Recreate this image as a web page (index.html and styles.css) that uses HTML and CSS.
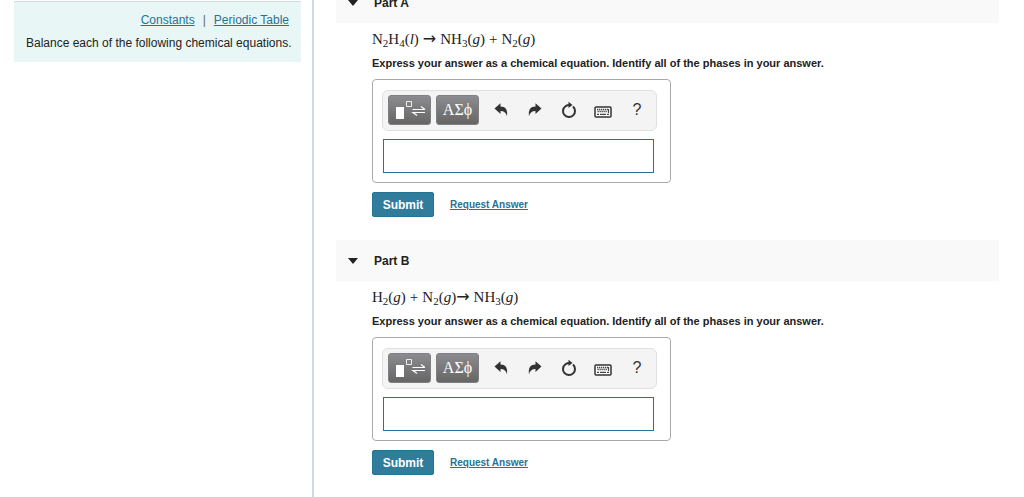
FILE: index.html
```html
<!DOCTYPE html>
<html lang="en">
<head>
    <meta charset="UTF-8">
    <meta name="viewport" content="width=device-width, initial-scale=1.0">
    <title>Balancing Chemical Equations</title>
    <link rel="stylesheet" href="styles.css">
</head>
<body>
    <!-- shared toolbar icons -->
    <svg class="icon-defs" aria-hidden="true">
        <symbol id="icon-template" viewBox="0 0 30 20">
            <path d="M1 7h8v12H1z" fill="#fff"/>
            <path d="M11.500 1.500h5v5h-5z" fill="none" stroke="#eee"/>
            <path d="M17.500 9.500H30l-4-3M30 12.500H18l4 3" fill="none" stroke="#fff" stroke-width="1.200"/>
        </symbol>
        <symbol id="icon-undo" viewBox="0 0 14 14">
            <path d="M.5 5.500L6.500 .3v3.200c4.800 0 7.500 3 6.500 9.800C12.300 10 10.200 8 6.500 8v3z" fill="#333"/>
        </symbol>
        <symbol id="icon-redo" viewBox="0 0 14 14">
            <path d="M13.500 5.500L7.500 .3v3.200C2.700 3.500 0 6.500 1 13.300 1.700 10 3.800 8 7.500 8v3z" fill="#333"/>
        </symbol>
        <symbol id="icon-reset" viewBox="0 0 16 18">
            <path d="M12 5.600A6 6 0 1 1 4.500 5.200Q6 4 9 4" fill="none" stroke="#333" stroke-width="2"/>
            <path d="M7.500 .8L11.500 4 7.500 7z" fill="#333"/>
        </symbol>
        <symbol id="icon-keyboard" viewBox="0 0 18 12">
            <rect x="1" y="1" width="16" height="10" rx="1" fill="#fff" stroke="#333" stroke-width="1.500"/>
            <path d="M3 3.500h11M3.500 5.500h10" stroke="#444" stroke-width="1.300" stroke-dasharray="1.300 .7"/>
            <path d="M3 8.300h2m1 0h6m1 0h2M14.500 3v4" stroke="#444" stroke-width="1.200"/>
        </symbol>
    </svg>

    <div class="page">
        <aside class="sidebar">
            <div class="intro">
                <nav class="intro-links">
                    <a href="#constants">Constants</a>
                    <span class="separator">|</span>
                    <a href="#periodic-table">Periodic Table</a>
                </nav>
                <p>Balance each of the following chemical equations.</p>
            </div>
        </aside>

        <main class="content">
            <section class="part">
                <h2 class="part-header"><span class="caret"></span>Part A</h2>
                <div class="part-body">
                    <p class="equation">
                        <span>N<sub>2</sub>H<sub>4</sub>(<i>l</i>)</span>
                        <span class="arrow">→</span>
                        <span>NH<sub>3</sub>(<i>g</i>)</span>
                        <span>+</span>
                        <span>N<sub>2</sub>(<i>g</i>)</span>
                    </p>
                    <label class="instruction" for="answer-a">Express your answer as a chemical equation. Identify all of the phases in your answer.</label>
                    <div class="answer-box">
                        <div class="toolbar">
                            <button type="button" class="palette" aria-label="Templates"><svg class="template"><use href="#icon-template"/></svg></button>
                            <button type="button" class="palette">ΑΣϕ</button>
                            <button type="button" class="tool" aria-label="Undo"><svg width="14" height="14"><use href="#icon-undo"/></svg></button>
                            <button type="button" class="tool" aria-label="Redo"><svg width="14" height="14"><use href="#icon-redo"/></svg></button>
                            <button type="button" class="tool" aria-label="Reset"><svg width="16" height="18"><use href="#icon-reset"/></svg></button>
                            <button type="button" class="tool keyboard" aria-label="Keyboard shortcuts"><svg width="18" height="12"><use href="#icon-keyboard"/></svg></button>
                            <button type="button" class="tool">?</button>
                        </div>
                        <input type="text" id="answer-a" class="answer-input">
                    </div>
                    <div class="actions">
                        <button type="submit" class="submit">Submit</button>
                        <a href="#request-a">Request Answer</a>
                    </div>
                </div>
            </section>

            <section class="part">
                <h2 class="part-header"><span class="caret"></span>Part B</h2>
                <div class="part-body">
                    <p class="equation">
                        <span>H<sub>2</sub>(<i>g</i>)</span>
                        <span>+</span>
                        <span>N<sub>2</sub>(<i>g</i>)<span class="arrow">→</span></span>
                        <span>NH<sub>3</sub>(<i>g</i>)</span>
                    </p>
                    <label class="instruction" for="answer-b">Express your answer as a chemical equation. Identify all of the phases in your answer.</label>
                    <div class="answer-box">
                        <div class="toolbar">
                            <button type="button" class="palette" aria-label="Templates"><svg class="template"><use href="#icon-template"/></svg></button>
                            <button type="button" class="palette">ΑΣϕ</button>
                            <button type="button" class="tool" aria-label="Undo"><svg width="14" height="14"><use href="#icon-undo"/></svg></button>
                            <button type="button" class="tool" aria-label="Redo"><svg width="14" height="14"><use href="#icon-redo"/></svg></button>
                            <button type="button" class="tool" aria-label="Reset"><svg width="16" height="18"><use href="#icon-reset"/></svg></button>
                            <button type="button" class="tool keyboard" aria-label="Keyboard shortcuts"><svg width="18" height="12"><use href="#icon-keyboard"/></svg></button>
                            <button type="button" class="tool">?</button>
                        </div>
                        <input type="text" id="answer-b" class="answer-input">
                    </div>
                    <div class="actions">
                        <button type="submit" class="submit">Submit</button>
                        <a href="#request-b">Request Answer</a>
                    </div>
                </div>
            </section>
        </main>
    </div>
</body>
</html>
```
FILE: styles.css
```css
* {
    box-sizing: border-box;
}

body {
    margin: 0;
    background: #fff;
    color: #222;
    font-family: "Liberation Sans", Arial, sans-serif;
    font-size: 12px;
}

p, h2 {
    margin: 0;
}

a {
    color: #237497;
}

.icon-defs {
    display: none;
}

.page {
    display: flex;
    height: 100vh;
    overflow: hidden;
}

.sidebar {
    flex: 0 0 314px;
    padding: 1px 11px 0 14px;
    border-right: 2px solid #c9d9e6;
}

.intro {
    padding: 10px 6px 11px 12px;
    border-top: 1px solid #d3dedd;
    background: #e8f6f5;
    line-height: 16px;
    white-space: nowrap;
}

.intro-links {
    display: flex;
    justify-content: flex-end;
    gap: 8px;
    margin-bottom: 7px;
    padding-right: 6px;
}

.separator {
    color: #666;
}

/* the column is scrolled a little past its top */
.content {
    flex: 1;
    min-width: 0;
    margin-top: -18px;
    padding: 0 25px 0 22px;
}

.part-header {
    display: flex;
    align-items: center;
    gap: 16px;
    height: 41px;
    padding-left: 12px;
    background: #f9f9f9;
    font-size: 12px;
}

.caret {
    border: 5px solid transparent;
    border-top: 6px solid #222;
    border-bottom: 0;
}

.part-body {
    padding: 6px 0 23px 36px;
}

.equation {
    display: flex;
    gap: 4px;
    margin-bottom: 6px;
    font-family: "Liberation Serif", "Times New Roman", serif;
    font-size: 15px;
    line-height: 20px;
}

.equation sub {
    font-size: 11px;
    line-height: 0;
    vertical-align: -3px;
}

.arrow {
    font-family: "DejaVu Sans", sans-serif;
    font-size: 16px;
}

.instruction {
    display: block;
    margin-bottom: 8px;
    font-size: 11px;
    font-weight: bold;
    line-height: 16px;
}

.answer-box {
    width: 299px;
    max-width: 100%;
    padding: 10px 13px 9px 9px;
    border: 1px solid #aaa;
    border-radius: 4px;
}

.toolbar {
    display: flex;
    align-items: center;
    height: 41px;
    margin-bottom: 8px;
    padding: 0 5px 2px;
    border: 1px solid #e0e0e0;
    border-radius: 6px;
    background: #f4f4f4;
}

.palette {
    flex: none;
    width: 43px;
    height: 30px;
    margin-right: 5px;
    padding: 0;
    border: 1px solid #808084;
    border-radius: 3px;
    background: linear-gradient(#8c8c90, #666);
    color: #fff;
    font-family: "Liberation Serif", "Times New Roman", serif;
    font-size: 16px;
}

.template {
    display: block;
    width: 30px;
    height: 20px;
    margin: 0 auto;
}

.tool {
    display: flex;
    flex: 0 0 34px;
    align-items: center;
    justify-content: center;
    height: 30px;
    padding: 0;
    border: 0;
    background: none;
    color: #333;
    font-family: "Liberation Sans", Arial, sans-serif;
    font-size: 16px;
}

.keyboard {
    padding-top: 4px;
}

.answer-input {
    display: block;
    width: 271px;
    max-width: 100%;
    height: 34px;
    margin-left: 1px;
    padding: 0 8px;
    border: 1px solid #237497;
    background: #fff;
    font-size: 14px;
}

.actions {
    display: flex;
    align-items: center;
    gap: 16px;
    margin-top: 9px;
    font-size: 10px;
    font-weight: bold;
}

.submit {
    width: 62px;
    height: 25px;
    padding: 0;
    border: 1px solid #237497;
    border-radius: 2px;
    background: #317b9b;
    color: #fff;
    font-family: "Liberation Sans", Arial, sans-serif;
    font-size: 12px;
    font-weight: bold;
}
```
